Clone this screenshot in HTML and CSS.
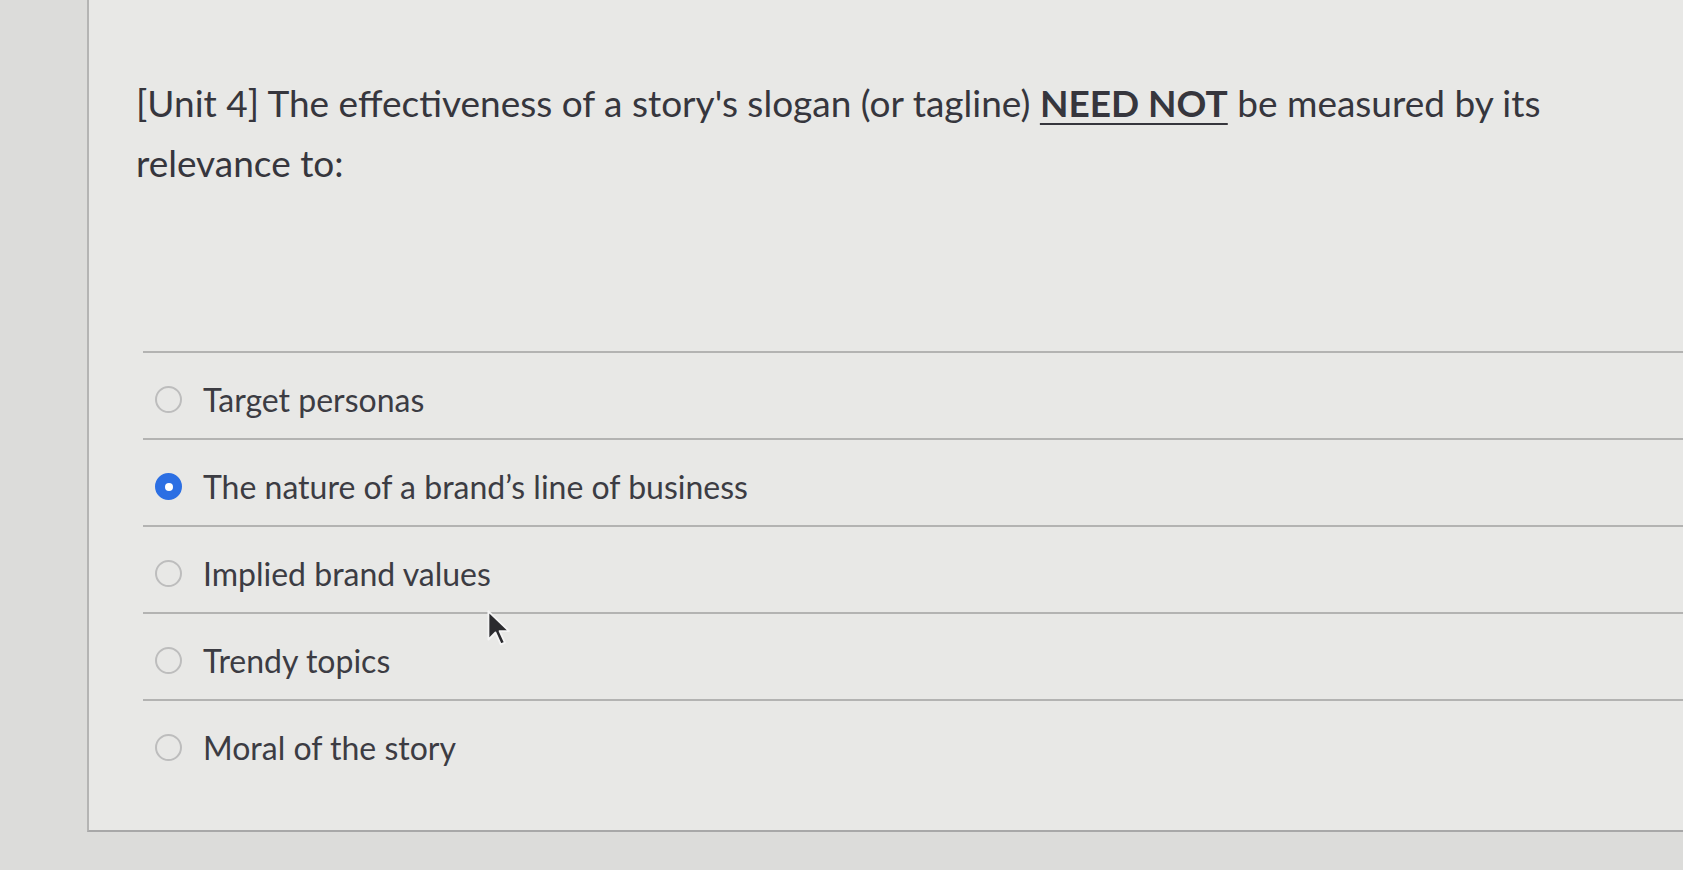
FILE: index.html
```html
<!DOCTYPE html>
<html lang="en">
<head>
<meta charset="utf-8">
<title>Question</title>
<link rel="stylesheet" href="styles.css">
</head>
<body>
<div class="page">
  <div class="card">
    <p class="question"><span>[Unit 4] The effectiveness of a story's slogan (or tagline)</span> <strong class="emph">NEED NOT</strong> <span>be measured by its</span> <span>relevance to:</span></p>
    <ul class="options">
      <li class="option"><span class="radio"></span><span class="label">Target personas</span></li>
      <li class="option"><span class="radio radio-on"><span class="dot"></span></span><span class="label">The nature of a brand’s line of business</span></li>
      <li class="option"><span class="radio"></span><span class="label">Implied brand values</span></li>
      <li class="option"><span class="radio"></span><span class="label">Trendy topics</span></li>
      <li class="option"><span class="radio"></span><span class="label">Moral of the story</span></li>
    </ul>
  </div>
  <svg class="cursor" width="26" height="40" viewBox="0 0 22 34" aria-hidden="true">
    <path d="M2 2 L2 26 L8 20 L12.5 30 L16 28.5 L11.5 18.8 L19.5 18.8 Z" fill="#2a2a2e" stroke="#f4f4f4" stroke-width="1.6" stroke-linejoin="round"/>
  </svg>
</div>
</body>
</html>
```

FILE: styles.css
```css
html, body {
  margin: 0;
  padding: 0;
}
body {
  background: #dcdcda;
  font-family: Lato, "Open Sans", sans-serif;
  color: #36363d;
  width: 1683px;
  height: 870px;
  overflow: hidden;
}
.page {
  position: relative;
  height: 870px;
  padding-left: 87px;
  box-sizing: border-box;
}
.card {
  background: #e8e8e6;
  border-left: 2px solid #b4b4b3;
  border-bottom: 2px solid #a8a8a8;
  height: 832px;
  box-sizing: border-box;
}
.question {
  margin: 0;
  padding: 73px 80px 0 47px;
  font-size: 37px;
  line-height: 60px;
  font-weight: 400;
}
.emph {
  font-weight: 700;
  text-decoration: underline;
  text-decoration-thickness: 2px;
  text-underline-offset: 6px;
}
.options {
  list-style: none;
  margin: 158px 0 0 54px;
  padding: 0;
}
.option {
  display: flex;
  align-items: center;
  height: 87px;
  padding-top: 8px;
  box-sizing: border-box;
  border-top: 2px solid #b3b3b2;
}
.radio {
  width: 27px;
  height: 27px;
  border-radius: 50%;
  border: 2px solid #bdbdbd;
  box-sizing: border-box;
  margin-left: 12px;
  margin-right: 21px;
  display: flex;
  align-items: center;
  justify-content: center;
  flex: none;
}
.radio-on {
  background: #2c6fe3;
  border-color: #2c6fe3;
}
.dot {
  width: 8px;
  height: 8px;
  border-radius: 50%;
  background: #ffffff;
}
.label {
  font-size: 32px;
  line-height: 40px;
  color: #3c3c43;
}
.cursor {
  position: absolute;
  left: 486px;
  top: 609px;
}
```
